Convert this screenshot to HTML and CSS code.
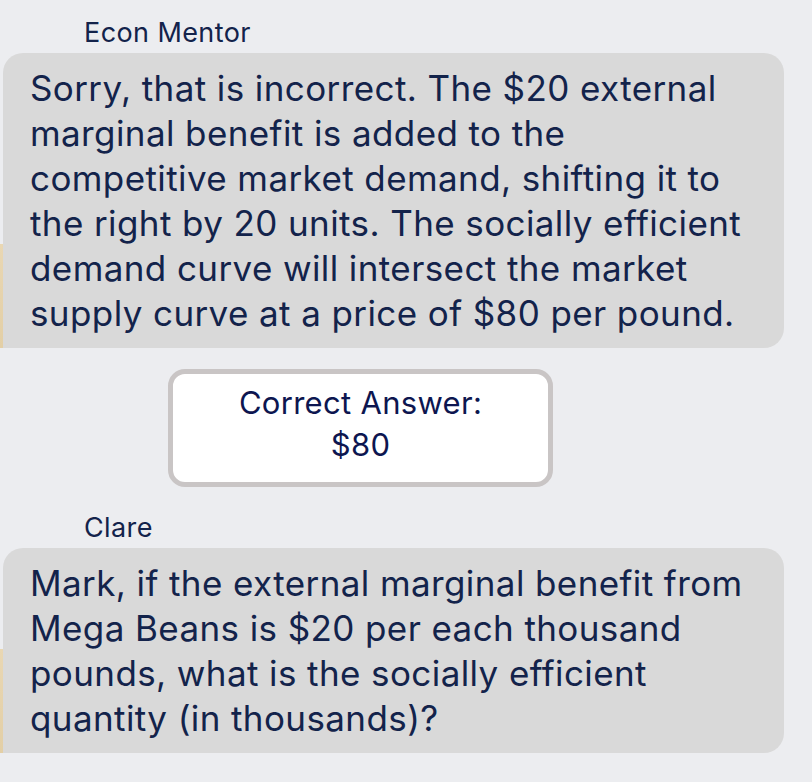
FILE: index.html
```html
<!DOCTYPE html>
<html>
<head>
<meta charset="utf-8">
<link rel="stylesheet" href="styles.css">
</head>
<body>
<div class="chat">
  <div class="label">Econ Mentor</div>
  <div class="row">
    <div class="avatar"></div>
    <div class="bubble">Sorry, that is incorrect. The $20 external marginal benefit is added to the competitive market demand, shifting it to the right by 20 units. The socially efficient demand curve will intersect the market supply curve at a price of $80 per pound.</div>
  </div>
  <div class="answer">
    <div class="answer-title">Correct Answer:</div>
    <div class="answer-value">$80</div>
  </div>
  <div class="label label-second">Clare</div>
  <div class="row">
    <div class="avatar"></div>
    <div class="bubble">Mark, if the external marginal benefit from Mega Beans is $20 per each thousand pounds, what is the socially efficient quantity (in thousands)?</div>
  </div>
</div>
</body>
</html>
```
FILE: styles.css
```css
html, body {
  margin: 0;
  padding: 0;
  background: #ecedf0;
}
body {
  font-family: Inter, "Noto Sans", sans-serif;
  color: #13234b;
  width: 812px;
  height: 782px;
  overflow: hidden;
}
.chat {
  display: flex;
  flex-direction: column;
  align-items: flex-start;
  padding-top: 17px;
}
.label {
  font-size: 27px;
  letter-spacing: 0.4px;
  line-height: 32px;
  margin-left: 84px;
  margin-bottom: 4px;
}
.label-second {
  margin-top: 25px;
}
.row {
  position: relative;
  padding-left: 3px;
}
.avatar {
  position: absolute;
  left: 0;
  bottom: 0;
  width: 40px;
  height: 104px;
  background: linear-gradient(180deg, #e9d7b3, #e3cfa6);
}
.bubble {
  position: relative;
  width: 727px;
  background: #d9d9d9;
  border-radius: 20px 20px 20px 0;
  padding: 13px 27px 12px 27px;
  font-size: 35px;
  letter-spacing: 0.4px;
  line-height: 45px;
}
.answer {
  margin-top: 21px;
  margin-left: 168px;
  width: 375px;
  height: 100px;
  padding-bottom: 8px;
  background: #ffffff;
  border: 5px solid #c9c5c5;
  border-radius: 17px;
  display: flex;
  flex-direction: column;
  align-items: center;
  justify-content: center;
  color: #0d1650;
  font-size: 31px;
  letter-spacing: 0.3px;
  line-height: 42px;
}
```
